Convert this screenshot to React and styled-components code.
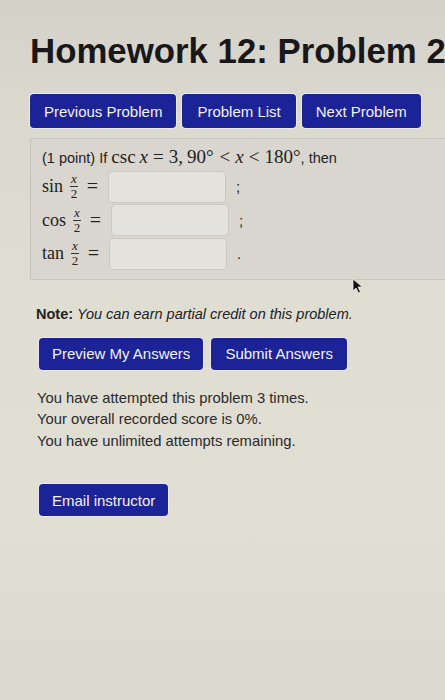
import React from "react";
import styled, { createGlobalStyle } from "styled-components";

const Global = createGlobalStyle`
  html, body { margin: 0; padding: 0; }
  body {
    width: 445px;
    height: 700px;
    overflow: hidden;
    background: linear-gradient(180deg, #d4d1c9 0%, #dcd9cf 18%, #e0ddd3 45%, #e1ded4 75%, #dbd9d0 100%);
    font-family: "Liberation Sans", Arial, sans-serif;
    color: #222;
  }
`;

const Page = styled.div`
  position: relative;
  height: 700px;
  padding-left: 30px;
  overflow: hidden;
`;

const Title = styled.h1`
  margin: 32px 0 0;
  font-size: 34.8px;
  line-height: 38px;
  font-weight: 700;
  color: #18181a;
  white-space: nowrap;
`;

const ButtonRow = styled.div`
  display: flex;
  gap: ${(p) => p.$gap || 6}px;
  margin-top: ${(p) => p.$top || 0}px;
  margin-left: ${(p) => p.$left || 0}px;
`;

const Button = styled.button`
  height: ${(p) => p.$h || 32}px;
  padding: 0 ${(p) => p.$px || 14}px;
  border: none;
  border-radius: 4px;
  background: #1c2396;
  color: #f2f2f6;
  font-family: "Liberation Sans", Arial, sans-serif;
  font-size: 15px;
  white-space: nowrap;
  box-shadow: 0 0 0 1px #e9e8f0;
`;

const ProblemBox = styled.div`
  margin-top: 10px;
  margin-right: -10px;
  padding: 8px 0 9px 11px;
  background: #d8d6ce;
  border: 1px solid #c6c4bc;
  border-right: none;
  border-radius: 3px 0 0 3px;
`;

const Statement = styled.div`
  font-size: 14.5px;
  line-height: 20px;
  display: flex;
  align-items: baseline;
  white-space: nowrap;
`;

const Math = styled.span`
  font-family: "Liberation Serif", "Times New Roman", serif;
  font-size: 19px;
  margin-left: ${(p) => p.$ml || 0}px;
  margin-right: ${(p) => p.$mr || 0}px;
  font-style: ${(p) => (p.$italic ? "italic" : "normal")};
`;

const Rows = styled.div`
  display: flex;
  flex-direction: column;
  gap: 2px;
  margin-top: 3px;
`;

const Row = styled.div`
  display: flex;
  align-items: center;
  height: 31.5px;
`;

const Fn = styled.span`
  font-family: "Liberation Serif", "Times New Roman", serif;
  font-size: 18px;
  color: #222;
`;

const Frac = styled.span`
  display: inline-flex;
  flex-direction: column;
  align-items: center;
  margin: 0 9px 0 7px;
  font-family: "Liberation Serif", "Times New Roman", serif;
  font-size: 13px;
  line-height: 12px;
`;

const Num = styled.span`
  font-style: italic;
  padding: 0 1px 1px;
  border-bottom: 1px solid #333;
`;

const Den = styled.span`
  padding-top: 1px;
`;

const Eq = styled.span`
  font-family: "Liberation Serif", "Times New Roman", serif;
  font-size: 20px;
  margin-right: 10px;
`;

const Input = styled.div`
  width: 116px;
  height: 30px;
  background: #e4e2dc;
  border: 1px solid #cbc9c2;
  border-radius: 4px;
`;

const Punct = styled.span`
  margin-left: 10px;
  font-size: 15px;
`;

const Lower = styled.div`
  padding-left: 6px;
`;

const Note = styled.p`
  margin: 24px 0 0;
  font-size: 14.5px;
  line-height: 20px;
  white-space: nowrap;
  b { font-weight: 700; }
  i { font-style: italic; }
`;

const Attempts = styled.div`
  margin-top: 18px;
  padding-left: 1px;
  font-size: 14.8px;
  line-height: 21.5px;
  color: #2a2a2a;
`;

const Cursor = styled.svg`
  position: absolute;
  left: 352px;
  top: 278px;
`;

function FracX() {
  return (
    <Frac>
      <Num>x</Num>
      <Den>2</Den>
    </Frac>
  );
}

const rows = [
  { fn: "sin", p: ";" },
  { fn: "cos", p: ";" },
  { fn: "tan", p: "." },
];

export default function App() {
  return (
    <>
      <Global />
      <Page>
        <Title>Homework 12: Problem 2</Title>
        <ButtonRow $top={24}>
          <Button $h={34}>Previous Problem</Button>
          <Button $h={34} $px={15}>Problem List</Button>
          <Button $h={34}>Next Problem</Button>
        </ButtonRow>
        <ProblemBox>
          <Statement>
            (1 point) If&nbsp;
            <Math>csc</Math>
            <Math $italic $ml={4}>x</Math>
            <Math $ml={5} $mr={5}>=</Math>
            <Math>3,</Math>
            <Math $ml={4}>90°</Math>
            <Math $ml={6} $mr={5}>&lt;</Math>
            <Math $italic>x</Math>
            <Math $ml={5} $mr={5}>&lt;</Math>
            <Math>180°</Math>
            , then
          </Statement>
          <Rows>
            {rows.map((r) => (
              <Row key={r.fn}>
                <Fn>{r.fn}</Fn>
                <FracX />
                <Eq>=</Eq>
                <Input />
                <Punct>{r.p}</Punct>
              </Row>
            ))}
          </Rows>
        </ProblemBox>
        <Lower>
          <Note>
            <b>Note:</b> <i>You can earn partial credit on this problem.</i>
          </Note>
          <ButtonRow $top={14} $gap={8} $left={3}>
            <Button $px={13}>Preview My Answers</Button>
            <Button>Submit Answers</Button>
          </ButtonRow>
          <Attempts>
            <div>You have attempted this problem 3 times.</div>
            <div>Your overall recorded score is 0%.</div>
            <div>You have unlimited attempts remaining.</div>
          </Attempts>
          <ButtonRow $top={32} $left={3}>
            <Button $px={13}>Email instructor</Button>
          </ButtonRow>
        </Lower>
        <Cursor width="12" height="16" viewBox="0 0 12 16">
          <path d="M1 1 L1 13 L4 10 L6.5 15 L8.5 14 L6 9 L10.5 9 Z" fill="#111" stroke="#eee" strokeWidth="0.8" />
        </Cursor>
      </Page>
    </>
  );
}
